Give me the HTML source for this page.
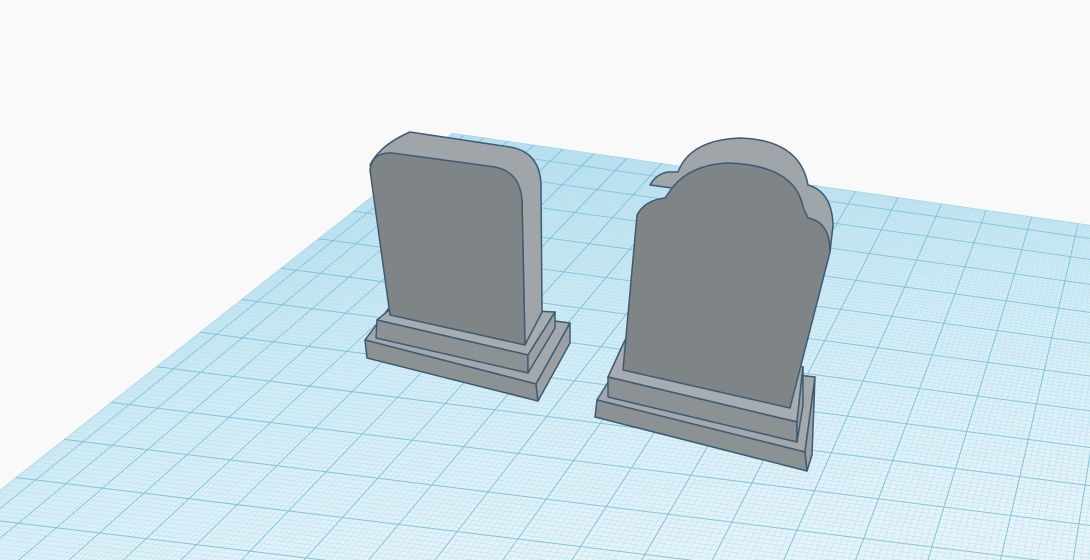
<!DOCTYPE html>
<html><head><meta charset="utf-8"><style>
html,body{margin:0;padding:0;background:#f9f9f9;overflow:hidden;width:1090px;height:560px}
svg{display:block}
</style></head><body>
<svg id="s" width="1090" height="560" viewBox="0 0 1090 560" xmlns="http://www.w3.org/2000/svg">
<defs>
<linearGradient id="pg" x1="0.3" y1="0" x2="0.6" y2="1">
<stop offset="0" stop-color="#b2ddee"/><stop offset="0.5" stop-color="#d2ecf5"/><stop offset="1" stop-color="#e6f4f9"/>
</linearGradient>
<clipPath id="cp"><polygon points="452,133 1090,225 1090,560 0,560 0,490"/></clipPath>
</defs>
<polygon points="452,133 1090,225 1090,560 0,560 0,490" fill="url(#pg)"/>
<g id="grid" clip-path="url(#cp)"></g>
<g stroke="#3f5a73" stroke-width="1.5" stroke-linejoin="round">
<polygon points="365,340 395,300 570,323 536,384" fill="#a3a8ac"/>
<polygon points="365,340 536,384 538,401 367,358" fill="#8c9194"/>
<polygon points="536,384 570,323 570,343 538,401" fill="#9ba0a4"/>
<polygon points="377,320 395,305 555,312 528,355" fill="#a7acb0"/>
<polygon points="377,320 528,355 528,373 376,338" fill="#8c9194"/>
<polygon points="528,355 555,312 555,328 528,373" fill="#9ba0a4"/>
<path d="M370,165 Q380,145 410,132 L510,147 Q540,152 541,185 L542,312 L525,345 L522,200 Z" fill="#a0a5a9"/>
<path d="M370,170 Q372,152 392,153 L495,167 Q520,172 522,200 L525,345 L390,315 Z" fill="#7f8486"/>
<polygon points="597,400 625,355 815,377 805,452" fill="#a3a8ac"/>
<polygon points="597,400 805,452 807,471 595,417" fill="#8c9194"/>
<polygon points="805,452 815,377 812,455 807,471" fill="#9ba0a4"/>
<polygon points="608,377 625,340 803,367 797,422" fill="#a7acb0"/>
<polygon points="608,377 797,422 797,442 608,397" fill="#8c9194"/>
<polygon points="797,422 803,367 803,405 797,442" fill="#9ba0a4"/>
<path d="M650,185 Q656,174 668,172 L678,172 Q690,140 740,138 Q800,140 808,185 Q832,192 833,225 L830,252 L803,210 L672,188 Z" fill="#a0a5a9"/>
<path d="M637,215 Q645,200 665,198 L672,188 Q690,165 727,163 Q795,165 803,207 L808,218 Q830,222 830,252 L790,408 L623,370 Z" fill="#7f8486"/>
</g>
</svg>
<script>
(function(){
var g=document.getElementById('grid');
var P00=[452,133],P10=[1700,313],P01=[-1051,1320],P11=[2600,1700];
function H(u,v){
 var x=(1-u)*(1-v)*P00[0]+u*(1-v)*P10[0]+(1-u)*v*P01[0]+u*v*P11[0];
 var y=(1-u)*(1-v)*P00[1]+u*(1-v)*P10[1]+(1-u)*v*P01[1]+u*v*P11[1];
 return [x,y];}
function f(t){return Math.pow(t,1.35);}
var N=300,s='';
for(var i=0;i<=N;i++){
 var t=f(i/N),maj=(i%10==0);
 var a=H(t,0),b=H(t,1),c=H(0,t),d=H(1,t);
 var st=maj?'stroke="#7fc3dd" stroke-width="1"':'stroke="#b6dfee" stroke-width="0.5"';
 s+='<line x1="'+a[0]+'" y1="'+a[1]+'" x2="'+b[0]+'" y2="'+b[1]+'" '+st+'/>';
 s+='<line x1="'+c[0]+'" y1="'+c[1]+'" x2="'+d[0]+'" y2="'+d[1]+'" '+st+'/>';
}
g.innerHTML=s;
})();
</script>
</body></html>
